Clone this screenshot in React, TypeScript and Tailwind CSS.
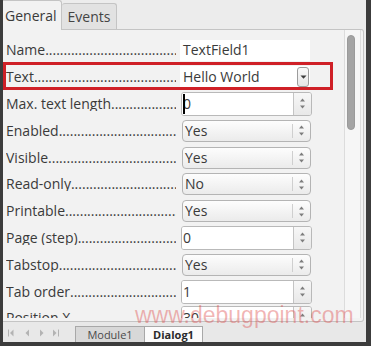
import React from "react";

const font = { fontFamily: '"Open Sans", "DejaVu Sans", sans-serif' } as const;

function SpinArrows({ color = "#7d7d7d" }: { color?: string }) {
  return (
    <svg width="7" height="13" viewBox="0 0 7 13">
      <path d="M1 4.5 L3.5 1.5 L6 4.5 Z" fill={color} />
      <path d="M1 8.5 L3.5 11.5 L6 8.5 Z" fill={color} />
    </svg>
  );
}

function Combo({ v }: { v: string }) {
  return (
    <div className="ml-[2px] w-[129px] h-[22px] rounded-[4px] border border-[#b4b4b4] bg-gradient-to-b from-[#fdfdfd] to-[#ebebeb] flex items-center">
      <span className="w-[109px] pl-[2px] leading-none">{v}</span>
      <div className="w-px h-[14px] bg-[#cfcfcf]" />
      <div className="flex-1 flex items-center justify-center">
        <SpinArrows />
      </div>
    </div>
  );
}

function Spin({ v, caret }: { v: string; caret?: boolean }) {
  return (
    <div className="ml-[1px] w-[131px] h-[24px] flex rounded-[3px] border border-[#b9b9b9] overflow-hidden">
      <div className="w-[112px] bg-white border-r border-[#c4c4c4] flex items-center pl-[1px] leading-none">
        {caret ? (
          <span className="relative">
            {v}
            <span className="absolute left-0 top-[-3px] w-[2px] h-[20px] bg-black" />
          </span>
        ) : (
          v
        )}
      </div>
      <div className="flex-1 bg-gradient-to-b from-[#f7f7f7] to-[#e8e8e8] flex items-center justify-center">
        <SpinArrows />
      </div>
    </div>
  );
}

function Row({ label, children }: { label: string; children?: React.ReactNode }) {
  return (
    <div className="h-[26.8px] flex items-center shrink-0 pl-[3px]">
      <div className="w-[170px] overflow-hidden whitespace-nowrap leading-none">
        {label}
        {".".repeat(70)}
      </div>
      <div className="ml-[4px] flex items-center">{children}</div>
    </div>
  );
}

export default function App() {
  return (
    <div
      className="relative w-[371px] h-[346px] bg-[#3c3c3c] pl-[3px] pr-[5px] pb-[4px] overflow-hidden text-[14px] text-[#3a3a3a]"
      style={font}
    >
      <div className="h-full bg-[#ececec] flex flex-col">
        {/* tabs */}
        <div className="h-[29px] flex items-end shrink-0">
          <div className="relative z-10 -mb-px h-[30px] w-[59px] bg-[#f2f2f2] border-t border-r border-[#c4c4c4] rounded-tr-[3px] flex items-center pl-[2px]">
            General
          </div>
          <div className="h-[26px] w-[55px] bg-[#e2e2e2] border-t border-r border-[#c4c4c4] rounded-t-[3px] flex items-center justify-center text-[#444]">
            Events
          </div>
        </div>
        {/* panel */}
        <div className="h-[293px] mr-[2px] bg-[#f2f2f2] border-t border-r border-b border-[#c4c4c4] rounded-tr-[3px] rounded-br-[3px] flex pb-[3px] shrink-0">
          <div className="flex-1 overflow-hidden pt-[7px] flex flex-col">
            <Row label="Name">
              <div className="w-[130px] h-[21px] bg-white flex items-center pl-[3px] leading-none">TextField1</div>
            </Row>
            <Row label="Text">
              <div className="w-[130px] h-[23px] bg-white flex items-center pl-[3px] leading-none">
                <span className="flex-1">Hello World</span>
                <div className="mr-[1px] w-[12px] h-[20px] rounded-[3px] border border-[#9c9c9c] bg-gradient-to-b from-[#fafafa] to-[#e6e6e6] flex items-center justify-center">
                  <svg width="7" height="4" viewBox="0 0 7 4">
                    <path d="M0.5 0.5 L6.5 0.5 L3.5 3.8 Z" fill="#3c3c3c" />
                  </svg>
                </div>
              </div>
            </Row>
            <Row label="Max. text length">
              <Spin v="0" caret />
            </Row>
            <Row label="Enabled">
              <Combo v="Yes" />
            </Row>
            <Row label="Visible">
              <Combo v="Yes" />
            </Row>
            <Row label="Read-only">
              <Combo v="No" />
            </Row>
            <Row label="Printable">
              <Combo v="Yes" />
            </Row>
            <Row label="Page (step)">
              <Spin v="0" />
            </Row>
            <Row label="Tabstop">
              <Combo v="Yes" />
            </Row>
            <Row label="Tab order">
              <Spin v="1" />
            </Row>
            <Row label="Position X">
              <Spin v="30" />
            </Row>
          </div>
          {/* scrollbar */}
          <div className="w-[17px] mr-[2px] bg-[#f6f6f6] border-l border-r border-[#dcdcdc] pt-[5px] pl-[2px]">
            <div className="w-[8px] h-[95px] rounded-full bg-[#a4a4a4] border border-[#9a9a9a]" />
          </div>
        </div>
        {/* bottom bar */}
        <div className="flex-1 bg-[#e8e8e8] flex items-end">
          <div className="w-[72px] h-full flex items-center pt-[2px]">
            <svg width="60" height="8" viewBox="0 0 60 8" className="ml-[4px]">
              <rect x="1" y="0.5" width="1" height="7" fill="#b3b3b3" />
              <path d="M6.5 0.5 L3 4 L6.5 7.5 Z" fill="#b3b3b3" />
              <path d="M22 0.5 L18.5 4 L22 7.5 Z" fill="#b3b3b3" />
              <path d="M33 0.5 L36.5 4 L33 7.5 Z" fill="#b3b3b3" />
              <path d="M46 0.5 L49.5 4 L46 7.5 Z" fill="#b3b3b3" />
              <rect x="51" y="0.5" width="1" height="7" fill="#b3b3b3" />
            </svg>
          </div>
          <div className="w-[69px] h-[16px] bg-[#d8d8d8] border-t border-l border-[#a8a8a8] flex items-center justify-center text-[11px] leading-none text-[#4a4a4a]">
            Module1
          </div>
          <div className="w-[59px] h-[16px] bg-[#fbfbfb] border-t border-l border-r border-[#a8a8a8] flex items-center justify-center text-[11px] font-bold leading-none text-[#2a2a2a]">
            Dialog1
          </div>
        </div>
      </div>

      {/* red annotation box */}
      <div className="absolute left-[3px] top-[62px] w-[330px] h-[28px] border-[3px] border-[#cf2027] z-20 pointer-events-none" />

      {/* watermark */}
      <div
        className="absolute left-[135px] top-[304px] text-[23px] leading-[23px] whitespace-nowrap z-30 pointer-events-none text-[rgba(220,60,60,0.38)]"
        style={{ fontFamily: '"Liberation Sans", Arial, sans-serif' }}
      >
        www.debugpoint.com
      </div>
    </div>
  );
}
